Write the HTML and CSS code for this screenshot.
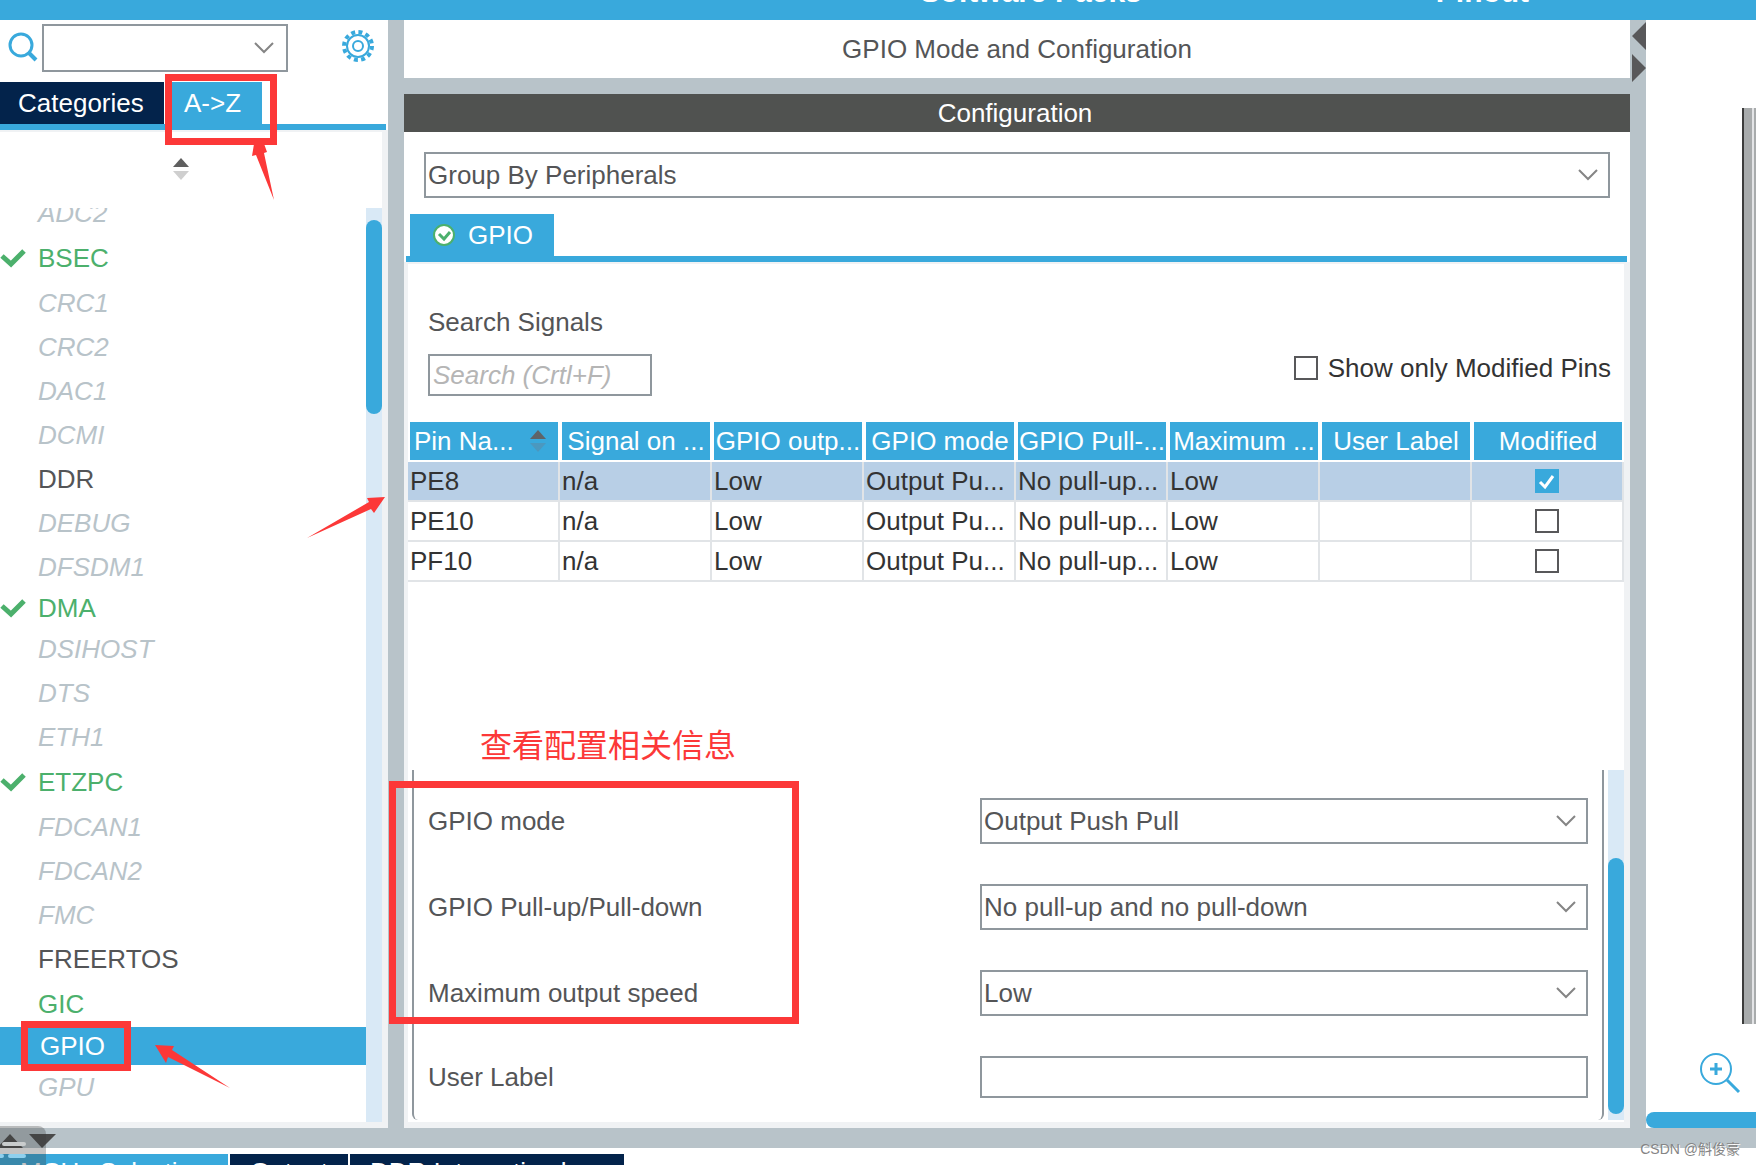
FILE: index.html
```html
<!DOCTYPE html>
<html lang="en">
<head>
    <meta charset="UTF-8">
    <meta name="viewport" content="width=device-width, initial-scale=1.0">
    <title>GPIO Mode and Configuration</title>
    <link rel="stylesheet" href="styles.css">
</head>
<body>
    <nav class="topbar">
        <a href="#software">Software Packs</a>
        <a href="#pinout">Pinout</a>
    </nav>

    <div class="workspace">
        <aside class="sidebar">
            <div class="search-row">
                <svg class="icon-search" width="30" height="30" viewBox="0 0 30 30" fill="none" stroke="#39a9dc">
                    <circle cx="13" cy="13" r="11" stroke-width="3"/>
                    <path d="M20 20l8 8" stroke-width="4"/>
                </svg>
                <div class="combo combo-search">
                    <select aria-label="Search peripheral"><option></option></select>
                    <svg class="chevron" width="20" height="12" viewBox="0 0 20 12"><path d="M1 1l9 9 9-9"/></svg>
                </div>
                <button class="gear" aria-label="Settings">
                    <svg width="34" height="34" viewBox="-17 -17 34 34" fill="none" stroke="#39a9dc" stroke-width="3">
                        <circle r="14" stroke-width="4" stroke-dasharray="4 3.33"/>
                        <circle r="11" stroke-width="2"/>
                        <circle r="5" stroke-width="2"/>
                    </svg>
                </button>
            </div>
            <div class="side-tabs">
                <button class="tab dark">Categories</button>
                <button class="tab active">A-&gt;Z</button>
            </div>
            <div class="side-body">
                <div class="sort-row">
                    <svg width="18" height="22" viewBox="0 0 18 22"><path d="M9 0l8 9H1z" fill="#5f5f5f"/><path d="M9 22l8-9H1z" fill="#cfcfcf"/></svg>
                </div>
                <div class="tree">
                    <ul class="tree-list">
                        <li class="off">ADC2</li>
                        <li class="on tall"><svg class="tick" width="26" height="20" viewBox="0 0 26 20"><path d="M2 8l9 8L24 3"/></svg>BSEC</li>
                        <li class="off">CRC1</li>
                        <li class="off">CRC2</li>
                        <li class="off">DAC1</li>
                        <li class="off">DCMI</li>
                        <li>DDR</li>
                        <li class="off">DEBUG</li>
                        <li class="off">DFSDM1</li>
                        <li class="on short"><svg class="tick" width="26" height="20" viewBox="0 0 26 20"><path d="M2 8l9 8L24 3"/></svg>DMA</li>
                        <li class="off">DSIHOST</li>
                        <li class="off">DTS</li>
                        <li class="off">ETH1</li>
                        <li class="on tall"><svg class="tick" width="26" height="20" viewBox="0 0 26 20"><path d="M2 8l9 8L24 3"/></svg>ETZPC</li>
                        <li class="off">FDCAN1</li>
                        <li class="off">FDCAN2</li>
                        <li class="off">FMC</li>
                        <li>FREERTOS</li>
                        <li class="on tall">GIC</li>
                        <li class="selected short">GPIO</li>
                        <li class="off">GPU</li>
                    </ul>
                    <div class="scrollbar"><div class="thumb side-thumb"></div></div>
                </div>
            </div>
        </aside>

        <main class="main">
            <h1 class="title">GPIO Mode and Configuration</h1>
            <section class="config">
                <h2 class="config-head">Configuration</h2>
                <div class="combo combo-group">
                    <select aria-label="Group by"><option>Group By Peripherals</option></select>
                    <svg class="chevron" width="20" height="12" viewBox="0 0 20 12"><path d="M1 1l9 9 9-9"/></svg>
                </div>
                <div class="config-tabs">
                    <button class="tab active">
                        <svg width="24" height="24" viewBox="0 0 24 24"><circle cx="12" cy="12" r="10" fill="#fff" stroke="#4cb06c" stroke-width="2"/><path d="M7 11l5 5 6-7" fill="none" stroke="#4cb06c" stroke-width="3"/></svg>
                        GPIO
                    </button>
                </div>
                <div class="config-body">
                    <div class="filters">
                        <div class="signal-search">
                            <label for="signals">Search Signals</label>
                            <input type="text" id="signals" placeholder="Search (Crtl+F)">
                        </div>
                        <label class="only-modified"><input type="checkbox"> Show only Modified Pins</label>
                    </div>
                    <table class="pins">
                        <thead>
                            <tr>
                                <th><div class="sorted"><span>Pin Na...</span><svg width="16" height="22" viewBox="0 0 16 22"><path d="M8 0l8 9H0z" fill="#5f6468"/><path d="M8 22l8-9H0z" fill="#4b98bf"/></svg></div></th>
                                <th>Signal on ...</th>
                                <th>GPIO outp...</th>
                                <th>GPIO mode</th>
                                <th>GPIO Pull-...</th>
                                <th>Maximum ...</th>
                                <th>User Label</th>
                                <th>Modified</th>
                            </tr>
                        </thead>
                        <tbody>
                            <tr class="current">
                                <td>PE8</td><td>n/a</td><td>Low</td><td>Output Pu...</td><td>No pull-up...</td><td>Low</td><td></td>
                                <td class="center"><input type="checkbox" aria-label="PE8 modified" checked></td>
                            </tr>
                            <tr>
                                <td>PE10</td><td>n/a</td><td>Low</td><td>Output Pu...</td><td>No pull-up...</td><td>Low</td><td></td>
                                <td class="center"><input type="checkbox" aria-label="PE10 modified"></td>
                            </tr>
                            <tr>
                                <td>PF10</td><td>n/a</td><td>Low</td><td>Output Pu...</td><td>No pull-up...</td><td>Low</td><td></td>
                                <td class="center"><input type="checkbox" aria-label="PF10 modified"></td>
                            </tr>
                        </tbody>
                    </table>
                    <p class="note" lang="zh">查看配置相关信息</p>
                    <div class="details">
                        <form class="fields">
                            <label for="mode">GPIO mode</label>
                            <div class="combo">
                                <select id="mode"><option>Output Push Pull</option></select>
                                <svg class="chevron" width="20" height="12" viewBox="0 0 20 12"><path d="M1 1l9 9 9-9"/></svg>
                            </div>
                            <label for="pull">GPIO Pull-up/Pull-down</label>
                            <div class="combo">
                                <select id="pull"><option>No pull-up and no pull-down</option></select>
                                <svg class="chevron" width="20" height="12" viewBox="0 0 20 12"><path d="M1 1l9 9 9-9"/></svg>
                            </div>
                            <label for="speed">Maximum output speed</label>
                            <div class="combo">
                                <select id="speed"><option>Low</option></select>
                                <svg class="chevron" width="20" height="12" viewBox="0 0 20 12"><path d="M1 1l9 9 9-9"/></svg>
                            </div>
                            <label for="user-label">User Label</label>
                            <input type="text" id="user-label">
                        </form>
                        <div class="scrollbar"><div class="thumb details-thumb"></div></div>
                    </div>
                </div>
            </section>
        </main>

        <div class="splitter">
            <svg width="14" height="62" viewBox="0 0 14 62" fill="#58585a"><path d="M14 2v28L0 16zM0 34v28l14-14z"/></svg>
        </div>

        <section class="pinout">
            <div class="chip"></div>
            <button class="zoom-in" aria-label="Zoom in">
                <svg width="42" height="42" viewBox="0 0 42 42" fill="none" stroke="#39a9dc" stroke-width="2">
                    <circle cx="17" cy="17" r="15"/>
                    <path d="M28 28l12 12" stroke-width="3"/>
                    <path d="M17 11v12M11 17h12" stroke-width="3"/>
                </svg>
            </button>
            <div class="thumb hscroll"></div>
        </section>
    </div>

    <div class="bottom-splitter">
        <svg width="56" height="14" viewBox="0 0 56 14" fill="#4a4a4a"><path d="M10 0l13 14H-3zM29 0h27L42 14z"/></svg>
    </div>
    <div class="bottom-tabs">
        <button class="tab active">MCUs Selection</button>
        <button class="tab dark">Output</button>
        <button class="tab dark">DDR Interactive logs</button>
    </div>

    <!-- annotations drawn over the window -->
    <div class="mark mark-tab"></div>
    <div class="mark mark-fields"></div>
    <div class="mark mark-gpio"></div>
    <svg class="arrow arrow-tab" width="24" height="62" viewBox="0 0 24 62"><path d="M5 0h7l5 14-3 1 10 47L6 17l-4 1z"/></svg>
    <svg class="arrow arrow-list" width="78" height="42" viewBox="0 0 78 42"><path d="M78 0L67 16l-3-4L0 41 62 5l-2-4z"/></svg>
    <svg class="arrow arrow-gpio" width="76" height="44" viewBox="0 0 76 44"><path d="M0 0l19 1-2 4 58 38-62-31-2 6z"/></svg>

    <div class="float-menu">
        <svg width="26" height="26" viewBox="0 0 26 26" stroke-width="4" stroke-linecap="round"><path d="M4 4h20" stroke="#c9cccd"/><path d="M0 16h2M10 16h14" stroke="#8fd0ee"/></svg>
    </div>
    <span class="watermark">CSDN @斛俊豪</span>
</body>
</html>
```
FILE: styles.css
```css
* {
    box-sizing: border-box;
}
body {
    display: flex;
    flex-direction: column;
    height: 100vh;
    margin: 0;
    overflow: hidden;
    position: relative;
    background-color: #fff;
    color: #545557;
    font-family: "Liberation Sans", "Noto Sans CJK SC", sans-serif;
    font-size: 26px;
    line-height: 30px;
}
button, input, select {
    margin: 0;
    border: none;
    border-radius: 0;
    background: none;
    color: inherit;
    font: inherit;
}
h1, h2, p, ul {
    margin: 0;
    padding: 0;
    font-size: 26px;
    font-weight: normal;
}
svg {
    display: block;
    flex: none;
}

/* top bar */
.topbar {
    display: flex;
    align-items: flex-end;
    flex: none;
    gap: 294px;
    height: 20px;
    padding: 0 0 13px 920px;
    overflow: hidden;
    background-color: #39a9dc;
}
.topbar a {
    color: #fff;
    font-size: 30px;
    font-weight: bold;
    text-decoration: none;
    white-space: nowrap;
}

.workspace {
    display: flex;
    flex: 1;
    min-height: 0;
    background-color: #b8c3c9;
}

/* shared controls */
.tab {
    display: flex;
    align-items: center;
    height: 42px;
    padding: 0 18px;
    color: #fff;
    white-space: nowrap;
}
.tab.dark {
    background-color: #03234b;
}
.tab.active {
    background-color: #39a9dc;
}
.combo {
    display: grid;
    align-items: center;
    height: 46px;
    border: 2px solid #8f979d;
    background-color: #fff;
}
.combo select {
    grid-area: 1 / 1;
    width: 100%;
    height: 100%;
    padding: 0 40px 0 2px;
    appearance: none;
}
.chevron {
    grid-area: 1 / 1;
    justify-self: end;
    margin-right: 10px;
    fill: none;
    stroke: #858585;
    stroke-width: 2;
    pointer-events: none;
}
input[type="text"] {
    border: 2px solid #8f979d;
    padding: 0 3px;
    background-color: #fff;
}
input[type="checkbox"] {
    flex: none;
    width: 24px;
    height: 24px;
    border: 2px solid #58585a;
    background-color: #fff;
    appearance: none;
}
input[type="checkbox"]:checked {
    border-color: #39a9dc;
    background: #39a9dc url("data:image/svg+xml,%3Csvg xmlns='http://www.w3.org/2000/svg' viewBox='0 0 20 20'%3E%3Cpath d='M3 11l5 5 8-11' fill='none' stroke='white' stroke-width='3'/%3E%3C/svg%3E") center / 20px no-repeat;
}
.scrollbar {
    flex: none;
    width: 16px;
    background-color: #d9e9f6;
}
.thumb {
    border-radius: 8px;
    background-color: #39a9dc;
}

/* sidebar */
.sidebar {
    display: flex;
    flex-direction: column;
    flex: none;
    width: 388px;
    margin-right: 16px;
    background-color: #fff;
}
.search-row {
    display: flex;
    align-items: flex-start;
    gap: 4px;
    height: 62px;
    padding: 4px 13px 0 8px;
}
.icon-search {
    margin-top: 8px;
}
.combo-search {
    width: 246px;
    height: 48px;
}
.combo-search .chevron {
    margin-right: 12px;
}
.gear {
    margin: 5px 0 0 auto;
    padding: 0;
}
.side-tabs {
    display: flex;
    gap: 2px;
    margin-right: 2px;
    border-bottom: 6px solid #39a9dc;
}
.side-tabs .tab.dark {
    width: 164px;
}
.side-tabs .tab.active {
    width: 96px;
}
.side-body {
    display: flex;
    flex-direction: column;
    flex: 1;
    min-height: 0;
    border: solid #f0f2f4;
    border-width: 2px 6px 6px 0;
}
.sort-row {
    display: flex;
    justify-content: center;
    flex: none;
    height: 76px;
    padding: 26px 20px 0 0;
}
.tree {
    display: flex;
    flex: 1;
    min-height: 0;
}
.tree-list {
    display: flex;
    flex-direction: column;
    justify-content: flex-end;
    flex: 1;
    padding-bottom: 13px;
    overflow: hidden;
    list-style: none;
}
.tree-list li {
    display: flex;
    align-items: center;
    flex: none;
    height: 44px;
    padding-left: 38px;
}
.tree-list .tall {
    height: 46px;
}
.tree-list .short {
    height: 38px;
}
.tree-list .off {
    color: #b8c3c9;
    font-style: italic;
}
.tree-list .on {
    color: #4cb06c;
}
.tree-list .selected {
    padding-left: 40px;
    background-color: #39a9dc;
    color: #fff;
}
.tick {
    margin: 0 12px 0 -38px;
    fill: none;
    stroke: #4cb06c;
    stroke-width: 5;
}
.side-thumb {
    height: 194px;
    margin-top: 12px;
}

/* main panel */
.main {
    display: flex;
    flex-direction: column;
    flex: 1;
    gap: 16px;
    min-width: 0;
}
.title {
    padding: 14px;
    background-color: #fff;
    text-align: center;
}
.config {
    display: flex;
    flex-direction: column;
    flex: 1;
    min-height: 0;
    background-color: #fff;
}
.config-head {
    padding: 4px 14px 4px 10px;
    background-color: #505250;
    color: #fff;
    text-align: center;
}
.combo-group {
    margin: 20px;
}
.config-tabs {
    flex: none;
    margin: -4px 3px 0 2px;
    padding-left: 4px;
    border-bottom: 6px solid #39a9dc;
}
.config-tabs .tab {
    gap: 12px;
    width: 144px;
    padding: 0 22px;
}
.config-body {
    display: flex;
    flex-direction: column;
    flex: 1;
    min-height: 0;
    border: solid #f0f2f4;
    border-width: 2px 6px 6px 4px;
}
.filters {
    display: flex;
    justify-content: space-between;
    align-items: flex-end;
    padding: 43px 13px 26px 20px;
    color: #545557;
}
.signal-search {
    display: flex;
    flex-direction: column;
    gap: 17px;
}
.signal-search input {
    width: 224px;
    height: 42px;
}
.signal-search input::placeholder {
    color: #b5b5b5;
    font-style: italic;
    opacity: 1;
}
.only-modified {
    display: flex;
    align-items: center;
    gap: 10px;
    margin-bottom: 13px;
    color: #333;
}

/* pin table */
.pins {
    width: 100%;
    border-collapse: separate;
    border-spacing: 0;
    table-layout: fixed;
    color: #333;
    white-space: nowrap;
}
.pins th {
    height: 40px;
    padding: 0;
    border: solid #fff;
    border-width: 0 2px 2px;
    background-color: #39a9dc;
    color: #fff;
    font-weight: normal;
}
.pins td {
    height: 40px;
    padding: 0 2px;
    border: solid #e1e4e7;
    border-width: 0 2px 2px 0;
}
.pins .center {
    text-align: center;
}
.pins .center input {
    display: block;
    margin: auto;
}
.pins .current {
    background-color: #b8cfe6;
}
.sorted {
    display: flex;
    align-items: center;
    justify-content: space-between;
    padding: 0 12px 0 4px;
}

/* annotation text above the form */
.note {
    margin-top: auto;
    padding: 0 0 4px 72px;
    color: #fc3838;
    font-size: 32px;
    line-height: 40px;
}

/* signal details */
.details {
    display: flex;
    flex: none;
    height: 350px;
    margin-bottom: 2px;
}
.fields {
    display: grid;
    grid-template-columns: 552px 1fr;
    align-content: start;
    align-items: center;
    row-gap: 40px;
    flex: 1;
    margin: 0 4px;
    padding: 28px 14px 0;
    border: solid #8f979d;
    border-width: 0 2px;
    border-radius: 0 0 6px 6px;
}
.fields input {
    height: 42px;
}
.details-thumb {
    height: 256px;
    margin-top: 88px;
}

.splitter {
    flex: none;
    width: 16px;
    padding-left: 2px;
}

/* pinout view */
.pinout {
    display: flex;
    flex-direction: column;
    align-items: flex-end;
    flex: none;
    width: 110px;
    background-color: #fff;
}
.chip {
    flex: 1;
    width: 14px;
    margin-top: 88px;
    border-left: 2px solid #3c3c3c;
    background: linear-gradient(to right, #a8abac 8px, #e3e4e6 8px 10px, #a8abac 10px);
}
.zoom-in {
    margin: 28px 15px 18px;
    padding: 0;
}
.hscroll {
    width: 100%;
    height: 16px;
    border-radius: 8px 0 0 8px;
}

/* bottom */
.bottom-splitter {
    flex: none;
    height: 20px;
    padding-top: 6px;
    background-color: #b8c3c9;
}
.bottom-tabs {
    display: flex;
    align-items: flex-start;
    flex: none;
    gap: 2px;
    height: 17px;
    padding-top: 6px;
    overflow: hidden;
}
.bottom-tabs .tab {
    width: 118px;
    height: 36px;
    padding: 0 20px;
}
.bottom-tabs .tab:first-child {
    width: 228px;
}
.bottom-tabs .tab:last-child {
    width: 274px;
}

/* red marks */
.mark {
    position: absolute;
    border: 7px solid #fc3838;
    pointer-events: none;
}
.mark-tab {
    left: 165px;
    top: 74px;
    width: 112px;
    height: 71px;
}
.mark-fields {
    left: 389px;
    top: 781px;
    width: 410px;
    height: 243px;
}
.mark-gpio {
    left: 21px;
    top: 1021px;
    width: 110px;
    height: 50px;
}
.arrow {
    position: absolute;
    fill: #fc3838;
    pointer-events: none;
}
.arrow-tab {
    left: 250px;
    top: 138px;
}
.arrow-list {
    left: 307px;
    top: 497px;
}
.arrow-gpio {
    left: 155px;
    top: 1045px;
}
.float-menu {
    position: absolute;
    left: 0;
    bottom: 0;
    width: 46px;
    height: 39px;
    padding-top: 14px;
    border-radius: 0 8px 0 0;
    background-color: rgba(60, 60, 60, 0.3);
}
.watermark {
    position: absolute;
    right: 16px;
    bottom: 6px;
    color: #858585;
    font-size: 14px;
    line-height: 20px;
    text-shadow: 1px 1px 0 #fff;
}
```
